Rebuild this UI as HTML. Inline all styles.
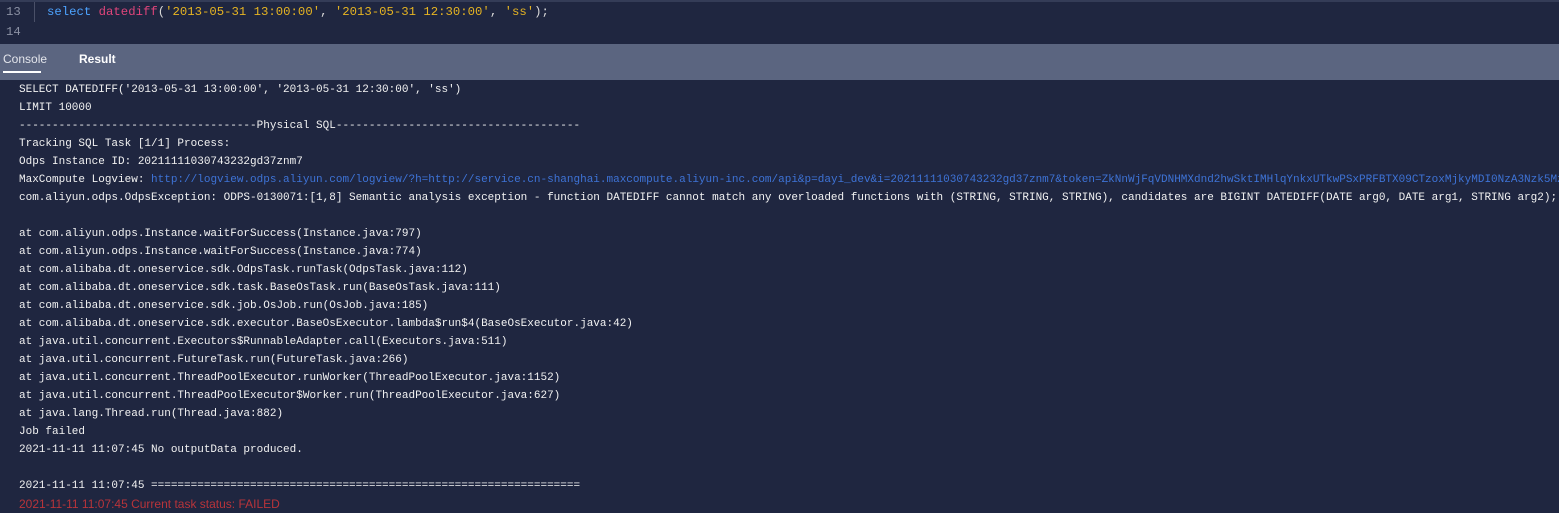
<!DOCTYPE html>
<html><head><meta charset="utf-8"><style>
html,body{margin:0;padding:0;width:1559px;height:511px;overflow:hidden;background:#1f2640;}
.top{position:absolute;left:0;top:0;width:1559px;height:2px;background:#343c57;}
.ed{position:absolute;left:0;top:0;width:1559px;height:44px;font-family:"Liberation Mono",monospace;font-size:12.3px;}
.ln{position:absolute;left:6px;width:20px;color:#8a90a3;}
.gut{position:absolute;left:34px;top:2px;width:1px;height:20px;background:#4a5068;}
.code{position:absolute;left:47px;color:#ccc;white-space:pre;}
.kw{color:#4da3ff}.fn{color:#e0457b}.st{color:#e6b422}.pn{color:#d8d8d8}
.bar{position:absolute;left:0;top:44px;width:1559px;height:36px;background:#5b6580;font-family:"Liberation Sans",sans-serif;font-size:12px;}
.tab{position:absolute;top:8px;}
.ul{position:absolute;left:3px;top:27px;width:38px;height:2px;background:#fff;}
.out{position:absolute;left:19px;top:81px;width:1540px;font-family:"Liberation Mono",monospace;font-size:11px;line-height:18px;color:#f2f2f2;overflow:hidden;}
.out div{height:18px;overflow:hidden;white-space:pre;}
a{color:#3e73d6;text-decoration:none;}
.out .red{font-family:"Liberation Sans",sans-serif;font-size:12px;color:#b8343a;}
</style></head><body>
<div class="top"></div>
<div class="ed">
<div class="ln" style="top:5px">13</div><div class="gut"></div>
<div class="code" style="top:5px"><span class="kw">select</span> <span class="fn">datediff</span><span class="pn">(</span><span class="st">'2013-05-31 13:00:00'</span><span class="pn">, </span><span class="st">'2013-05-31 12:30:00'</span><span class="pn">, </span><span class="st">'ss'</span><span class="pn">);</span></div>
<div class="ln" style="top:25px">14</div>
</div>
<div class="bar">
<div class="tab" style="left:3px;color:#e4e6ec">Console</div>
<div class="tab" style="left:79px;color:#fff;font-weight:bold">Result</div>
<div class="ul"></div>
</div>
<div class="out"><div>SELECT DATEDIFF('2013-05-31 13:00:00', '2013-05-31 12:30:00', 'ss')</div><div>LIMIT 10000</div><div>------------------------------------Physical SQL-------------------------------------</div><div>Tracking SQL Task [1/1] Process:</div><div>Odps Instance ID: 20211111030743232gd37znm7</div><div>MaxCompute Logview: <a>http://logview.odps.aliyun.com/logview/?h=http://service.cn-shanghai.maxcompute.aliyun-inc.com/api&amp;p=dayi_dev&amp;i=20211111030743232gd37znm7&amp;token=ZkNnWjFqVDNHMXdnd2hwSktIMHlqYnkxUTkwPSxPRFBTX09CTzoxMjkyMDI0NzA3Nzk5MzE=</a></div><div>com.aliyun.odps.OdpsException: ODPS-0130071:[1,8] Semantic analysis exception - function DATEDIFF cannot match any overloaded functions with (STRING, STRING, STRING), candidates are BIGINT DATEDIFF(DATE arg0, DATE arg1, STRING arg2);</div><div></div><div>at com.aliyun.odps.Instance.waitForSuccess(Instance.java:797)</div><div>at com.aliyun.odps.Instance.waitForSuccess(Instance.java:774)</div><div>at com.alibaba.dt.oneservice.sdk.OdpsTask.runTask(OdpsTask.java:112)</div><div>at com.alibaba.dt.oneservice.sdk.task.BaseOsTask.run(BaseOsTask.java:111)</div><div>at com.alibaba.dt.oneservice.sdk.job.OsJob.run(OsJob.java:185)</div><div>at com.alibaba.dt.oneservice.sdk.executor.BaseOsExecutor.lambda$run$4(BaseOsExecutor.java:42)</div><div>at java.util.concurrent.Executors$RunnableAdapter.call(Executors.java:511)</div><div>at java.util.concurrent.FutureTask.run(FutureTask.java:266)</div><div>at java.util.concurrent.ThreadPoolExecutor.runWorker(ThreadPoolExecutor.java:1152)</div><div>at java.util.concurrent.ThreadPoolExecutor$Worker.run(ThreadPoolExecutor.java:627)</div><div>at java.lang.Thread.run(Thread.java:882)</div><div>Job failed</div><div>2021-11-11 11:07:45 No outputData produced.</div><div></div><div>2021-11-11 11:07:45 =================================================================</div><div class="red">2021-11-11 11:07:45 Current task status: FAILED</div></div>
</body></html>
